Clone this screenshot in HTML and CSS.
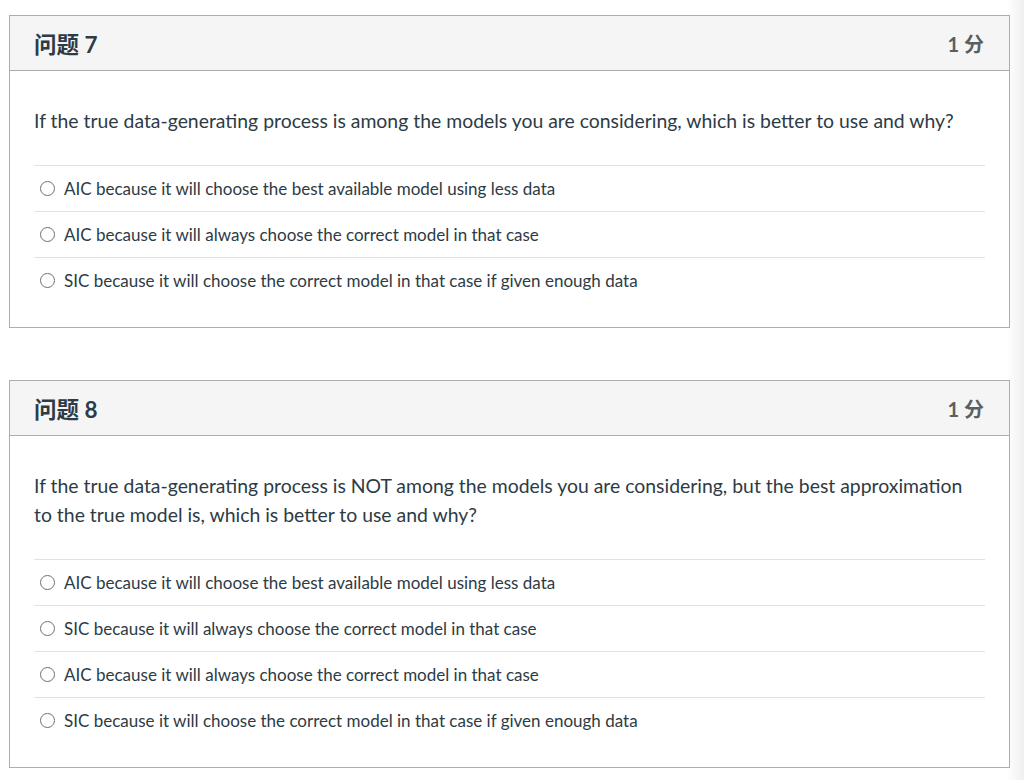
FILE: index.html
```html
<!DOCTYPE html>
<html lang="zh">
<head>
<meta charset="utf-8">
<title>Quiz</title>
<link rel="stylesheet" href="styles.css">
</head>
<body>
<div class="page">
  <section class="card">
    <header class="card-head">
      <h2 class="q-title">问题 7</h2>
      <span class="q-points">1 分</span>
    </header>
    <div class="card-body">
      <p class="q-text">If the true data-generating process is among the models you are considering, which is better to use and why?</p>
      <ul class="answers">
        <li class="answer"><span class="radio"></span><span>AIC because it will choose the best available model using less data</span></li>
        <li class="answer"><span class="radio"></span><span>AIC because it will always choose the correct model in that case</span></li>
        <li class="answer"><span class="radio"></span><span>SIC because it will choose the correct model in that case if given enough data</span></li>
      </ul>
    </div>
  </section>
  <section class="card">
    <header class="card-head">
      <h2 class="q-title">问题 8</h2>
      <span class="q-points">1 分</span>
    </header>
    <div class="card-body">
      <p class="q-text">If the true data-generating process is NOT among the models you are considering, but the best approximation to the true model is, which is better to use and why?</p>
      <ul class="answers">
        <li class="answer"><span class="radio"></span><span>AIC because it will choose the best available model using less data</span></li>
        <li class="answer"><span class="radio"></span><span>SIC because it will always choose the correct model in that case</span></li>
        <li class="answer"><span class="radio"></span><span>AIC because it will always choose the correct model in that case</span></li>
        <li class="answer"><span class="radio"></span><span>SIC because it will choose the correct model in that case if given enough data</span></li>
      </ul>
    </div>
  </section>
</div>
</body>
</html>
```
FILE: styles.css
```css
html, body {
  margin: 0;
  padding: 0;
}
body {
  font-family: Lato, "Noto Sans CJK SC", sans-serif;
  color: #2d3b45;
  background: linear-gradient(to right, #ffffff 0, #ffffff 1006px, #f0f0f0 1024px);
  min-height: 780px;
}
.page {
  padding: 15px 14px 0 9px;
  display: flex;
  flex-direction: column;
  gap: 52px;
}
.card {
  border: 1px solid #adadad;
  background: #fff;
}
.card-head {
  height: 54px;
  background: #f5f5f5;
  border-bottom: 1px solid #adadad;
  display: flex;
  align-items: center;
  justify-content: space-between;
  padding: 0 25px 0 24px;
}
.q-title {
  margin: 0;
  font-size: 22.5px;
  font-weight: 700;
  color: #2d3b45;
}
.q-points {
  font-size: 20px;
  font-weight: 700;
  color: #585f63;
}
.card-body {
  padding: 35px 24px 24px 24px;
}
.q-text {
  margin: 0 0 30px 0;
  font-size: 19.4px;
  line-height: 29px;
}
.answers {
  list-style: none;
  margin: 0;
  padding: 0;
}
.answer {
  border-top: 1px solid #dfe3e5;
  height: 44px;
  padding-bottom: 1px;
  display: flex;
  align-items: center;
  gap: 9px;
  font-size: 17px;
  padding-left: 6px;
}
.answer .radio {
  width: 13px;
  height: 13px;
  border: 1px solid #6f6f6f;
  border-radius: 50%;
  background: #fff;
  flex: none;
}
```
